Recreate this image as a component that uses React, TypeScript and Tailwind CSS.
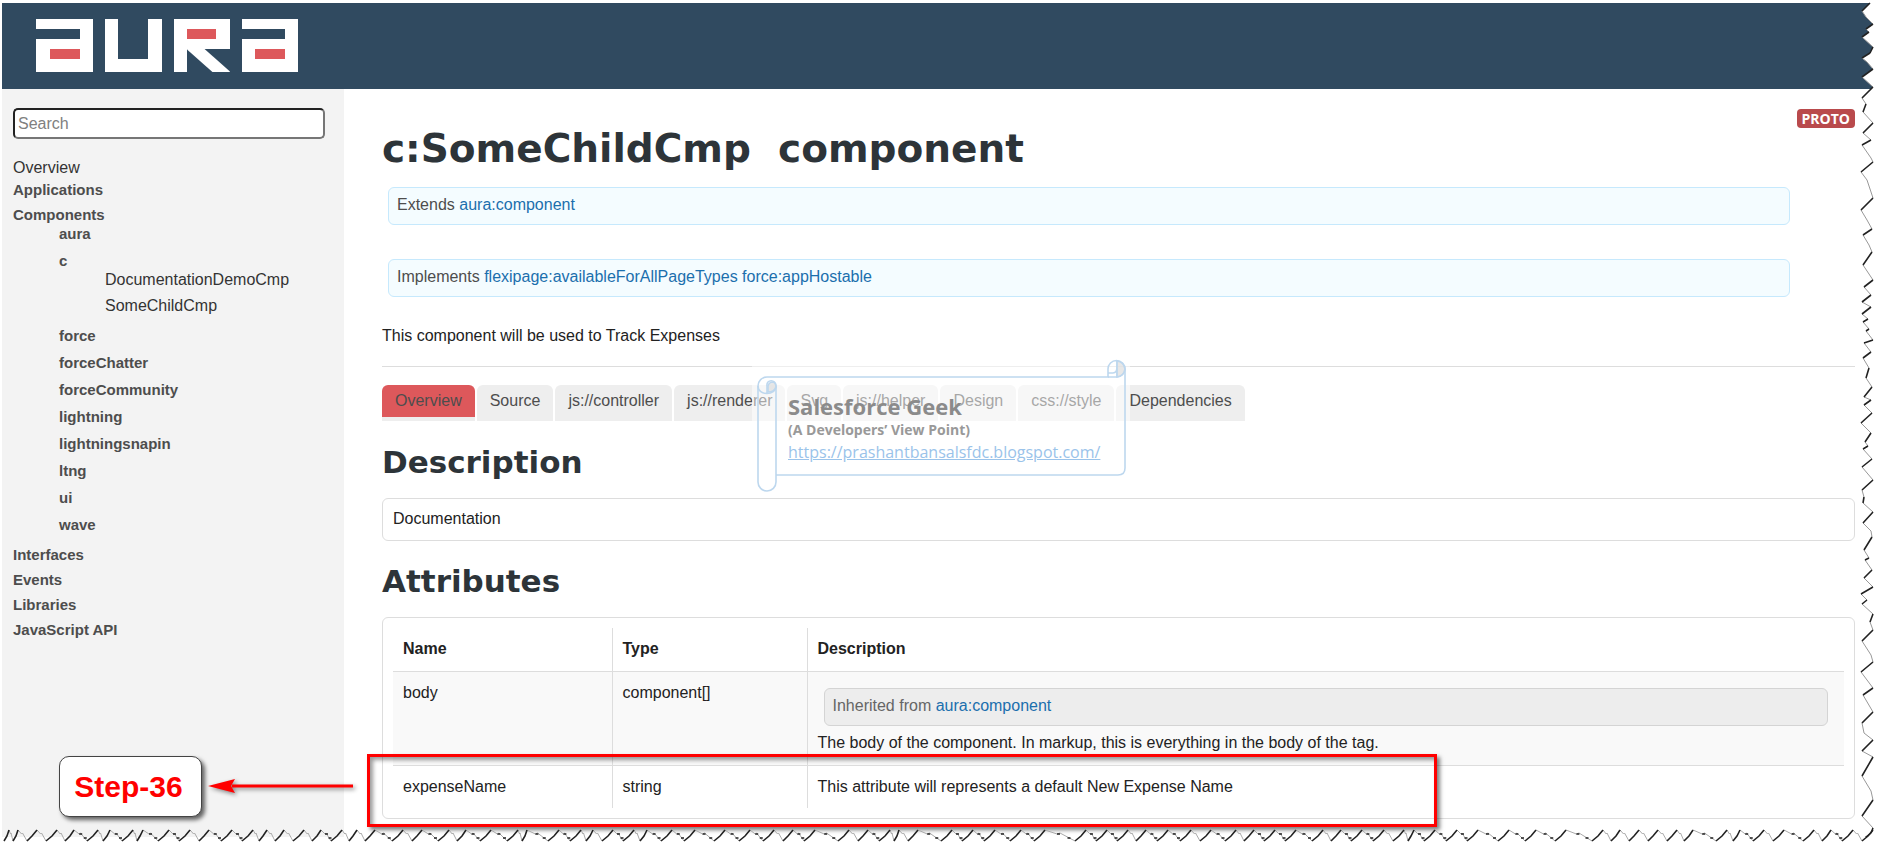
import React from "react";

type Point = [number, number];

const BOTTOM_PEAKS = [
  9, 18, 37, 57, 74, 98, 110, 133, 143, 169, 190, 209, 232, 253, 267, 284, 304, 321, 342, 357, 375, 403, 422, 449, 466,
  491, 518, 527, 559, 581, 593, 613, 634, 647, 672, 695, 725, 750, 774, 793, 815, 849, 868, 890, 899, 918, 952, 973,
  995, 1021, 1045, 1086, 1107, 1128, 1146, 1168, 1191, 1211, 1236, 1254, 1275, 1296, 1323, 1341, 1362, 1384, 1404,
  1414, 1435, 1457, 1478, 1509, 1536, 1566, 1603, 1620, 1639, 1658, 1677, 1693, 1727, 1740, 1764, 1784, 1814, 1831,
  1853, 1873,
];

const RIGHT_EDGE: Point[] = [
  [10, 3], [2, 11], [6, 17], [13, 24], [6, 29], [9, 32], [2, 37], [13, 47], [10, 53], [2, 58], [7, 62], [13, 69],
  [2, 77], [13, 87], [2, 98], [6, 104], [3, 112], [13, 123], [3, 133], [11, 140], [2, 145], [11, 158], [13, 162],
  [1, 172], [7, 180], [13, 198], [1, 210], [7, 220], [12, 229], [3, 235], [9, 245], [12, 252], [3, 265], [13, 280],
  [4, 287], [11, 295], [2, 302], [11, 307], [2, 314], [8, 319], [3, 322], [9, 329], [6, 331], [13, 340], [4, 343],
  [11, 352], [3, 358], [9, 368], [6, 378], [12, 387], [4, 397], [11, 400], [4, 405], [12, 413], [1, 423], [11, 433],
  [5, 442], [8, 446], [3, 449], [12, 459], [2, 467], [13, 480], [2, 490], [4, 497], [3, 503], [13, 512], [3, 523],
  [11, 531], [12, 537], [4, 550], [9, 558], [5, 560], [12, 570], [4, 578], [13, 587], [1, 594], [7, 600], [2, 604],
  [13, 614], [10, 622], [13, 630], [2, 641], [11, 655], [13, 662], [1, 672], [7, 680], [13, 688], [3, 695], [13, 712],
  [2, 723], [4, 733], [13, 740], [2, 751], [13, 757], [2, 776], [11, 791], [13, 800], [2, 816], [13, 828], [11, 833],
  [1, 841],
];

function bottomEdge() {
  let dark = "";
  let light = "";
  BOTTOM_PEAKS.forEach((x, i) => {
    const prev = i === 0 ? 0 : BOTTOM_PEAKS[i - 1];
    const rise = Math.min(11, Math.round((x - prev) * 0.55));
    const start = x - rise;
    dark += `M${start} 12L${start + Math.round(rise / 2)} 7L${x} 1`;
    const next = BOTTOM_PEAKS[i + 1];
    if (next !== undefined) {
      const end = next - Math.min(11, Math.round((next - x) * 0.55));
      const w = end - x;
      light += `M${x} 1L${x + w * 0.4} 5L${x + w * 0.5} 4L${end} 12`;
      if (w > 9) dark += `M${x + w * 0.4} 5h3M${x + w * 0.75} 9h3`;
    }
  });
  return { dark, light };
}

function rightEdge() {
  let dark = "";
  let light = "";
  RIGHT_EDGE.forEach(([x, y], i) => {
    const next = RIGHT_EDGE[i + 1];
    if (!next) return;
    const seg = `M${x} ${y}L${next[0]} ${next[1]}`;
    if (next[0] < x) dark += seg;
    else light += seg;
  });
  const fill = `M${RIGHT_EDGE.map(([x, y]) => `${x} ${y}`).join("L")}L40 841L40 0L10 0Z`;
  return { dark, light, fill };
}

const BOTTOM = bottomEdge();
const RIGHT = rightEdge();

function Logo() {
  return (
    <svg width="262" height="53" viewBox="0 0 262 53" role="img" aria-label="aura">
      <g fill="#fff">
        <rect x="0" y="0" width="57" height="10" />
        <rect x="44" y="10" width="13" height="10" />
        <rect x="0" y="20" width="57" height="33" />
        <rect x="69" y="0" width="13" height="53" />
        <rect x="112" y="0" width="14" height="53" />
        <rect x="69" y="40" width="57" height="13" />
        <rect x="138" y="0" width="56" height="30" />
        <rect x="138" y="0" width="13" height="53" />
        <rect x="206" y="0" width="56" height="10" />
        <rect x="249" y="10" width="13" height="10" />
        <rect x="206" y="20" width="56" height="33" />
      </g>
      <svg x="138" y="30" width="56" height="23" viewBox="0 0 56 23">
        <line x1="17" y1="-4" x2="52" y2="27" stroke="#fff" strokeWidth="12" />
      </svg>
      <g fill="#dd585b">
        <rect x="14" y="30" width="30" height="10" />
        <rect x="151" y="10" width="29" height="10" />
        <rect x="219" y="30" width="30" height="10" />
      </g>
    </svg>
  );
}

const NAMESPACES = ["force", "forceChatter", "forceCommunity", "lightning", "lightningsnapin", "ltng", "ui", "wave"];
const SECTIONS = ["Interfaces", "Events", "Libraries", "JavaScript API"];
const TABS = ["Source", "js://controller", "js://renderer", "Svg", "js://helper", "Design", "css://style", "Dependencies"];

function Sidebar() {
  return (
    <aside className="w-[342px] shrink-0 bg-[#f3f3f3] px-[11px] pt-[19px]">
      <input
        id="search"
        type="text"
        aria-label="Search"
        placeholder="Search"
        className="block h-[31px] w-[312px] rounded-[5px] border-2 border-t-[#222] border-l-[#222] border-r-[#767676] border-b-[#767676] bg-white px-[3px] text-base placeholder:text-[#808080]"
      />
      <nav className="pt-[18px] text-[15px] leading-[22px] font-bold text-[#4d4d4d]">
        <a href="#overview" className="block text-base leading-[22px] font-normal text-[#333]">
          Overview
        </a>
        <a href="#applications" className="block">
          Applications
        </a>
        <a href="#components" className="block pt-1 leading-[20px]">
          Components
        </a>
        <ul className="pl-[46px] leading-[27px]">
          <li className="leading-[18px]">
            <a href="#aura">aura</a>
          </li>
          <li className="pt-1">
            <a href="#c">c</a>
            <ul className="-mt-[7px] pb-[3px] pl-[46px] text-base leading-[26px] font-normal text-[#333]">
              <li className="-mt-1">
                <a href="#demo">DocumentationDemoCmp</a>
              </li>
              <li>
                <a href="#child">SomeChildCmp</a>
              </li>
            </ul>
          </li>
          {NAMESPACES.map((n) => (
            <li key={n}>
              <a href={`#${n}`}>{n}</a>
            </li>
          ))}
        </ul>
        <ul className="pt-1 leading-[25px]">
          {SECTIONS.map((s) => (
            <li key={s}>
              <a href="#section">{s}</a>
            </li>
          ))}
        </ul>
      </nav>
    </aside>
  );
}

function Watermark() {
  return (
    <div className="absolute top-[-26px] left-[370px] h-[134px] w-[378px] bg-white/50">
      <svg className="absolute top-0 left-[5px]" width="370" height="134" viewBox="757 359 370 134" fill="none" stroke="#bdd7ee" strokeWidth="1.6">
        <path d="M767 377H1109M776 475H1118Q1125 475 1125 468V369M758 386V482a9 9 0 0 0 18 0V386" />
        <path d="M767 377a9 9 0 0 0-9 9c0 10 18 10 18 0c0-7-10-7-9 0v7" />
        <path d="M1108 377V369a8.500 8.500 0 0 1 17 0a8.500 8.500 0 0 1-8 8h-9M1117 361v16M1108 373h5q4 0 4-6" />
        <path d="M768 392V386q1-4 5-4q3 1 3 5q-2 5-8 5Z" fill="#ddd" fillOpacity=".7" />
        <path d="M1117 361q7 1 8 8q-1 7-8 8Z" fill="#ddd" fillOpacity=".7" />
      </svg>
      <div className="absolute top-[34px] left-9 font-['Open_Sans','Noto_Sans',sans-serif] whitespace-nowrap text-[#8b8b8b]">
        <p className="text-[22px] leading-[26px] font-bold">Salesforce Geek</p>
        <p className="text-[14px] leading-[22px] font-bold text-[#999]">(A Developers’ View Point)</p>
        <a href="https://prashantbansalsfdc.blogspot.com/" className="block text-base leading-[22px] text-[#9ac3ea] underline">
          https://prashantbansalsfdc.blogspot.com/
        </a>
      </div>
    </div>
  );
}

function Tabs() {
  return (
    <div className="relative">
      <div role="tablist" className="flex items-start gap-[2px] text-base leading-[32px] whitespace-nowrap text-[#4d4d4d]">
        <button role="tab" aria-selected="true" className="h-9 rounded-t-md border-b-4 border-[#eee] bg-[#dd585b] px-[13px]">
          Overview
        </button>
        {TABS.map((t) => (
          <button key={t} role="tab" aria-selected="false" className="h-9 rounded-t-md bg-[#eee] px-[13px] pb-1">
            {t}
          </button>
        ))}
      </div>
      <Watermark />
    </div>
  );
}

const H2 = "font-['DejaVu_Sans',sans-serif] text-[31px] font-bold leading-[40px] text-[#2d3439]";
const NOTE = "ml-[6px] mr-[65px] h-[38px] rounded-md border border-[#c6e9fd] bg-[#f4fcff] px-2 leading-[34px] text-[#4d4d4d]";
const LINK = "text-[#1b6fad]";

function Attributes() {
  return (
    <div className="relative mt-[6px] rounded-md border border-[#ddd] p-[10px]">
      <table className="w-full border-collapse text-left">
        <thead>
          <tr className="h-[43px] border-b border-[#ddd]">
            <th className="w-[219px] border-r border-[#ddd] px-[10px]">Name</th>
            <th className="w-[195px] border-r border-[#ddd] px-[10px]">Type</th>
            <th className="px-[10px]">Description</th>
          </tr>
        </thead>
        <tbody className="align-top">
          <tr className="h-[94px] border-b border-[#ddd] bg-[#f9f9f9]">
            <td className="border-r border-[#ddd] px-[10px] pt-[10px]">body</td>
            <td className="border-r border-[#ddd] px-[10px] pt-[10px]">component[]</td>
            <td className="px-[10px] pt-4">
              <div className="mr-[6px] ml-[6px] h-[38px] rounded-md border border-[#d4d4d4] bg-[#ededed] px-2 leading-[34px] text-[#666]">
                Inherited from{" "}
                <a href="#aura-component" className={LINK}>
                  aura:component
                </a>
              </div>
              <p className="pt-[6px]">The body of the component. In markup, this is everything in the body of the tag.</p>
            </td>
          </tr>
          <tr className="h-[43px]">
            <td className="border-r border-[#ddd] px-[10px] pt-[10px]">expenseName</td>
            <td className="border-r border-[#ddd] px-[10px] pt-[10px]">string</td>
            <td className="px-[10px] pt-[10px]">This attribute will represents a default New Expense Name</td>
          </tr>
        </tbody>
      </table>
      <Callout />
    </div>
  );
}

function Callout() {
  return (
    <div className="pointer-events-none absolute -bottom-[9px] -left-[324px] h-[73px] w-[1378px]">
      <div className="absolute top-[2px] left-0 flex h-[61px] w-[143px] items-center justify-center rounded-[10px] border border-[#444] bg-white pr-1 text-[30px] font-bold text-[#f00] shadow-[3px_3px_4px_rgba(0,0,0,0.6)]">
        Step-36
      </div>
      <svg className="absolute top-[20px] left-[148px] drop-shadow-[2px_2px_2px_rgba(0,0,0,0.45)]" width="150" height="26" viewBox="0 0 150 26">
        <path d="M25 12H146" stroke="#f00" strokeWidth="3" />
        <path d="M1 12L28 5L24 12L28 19Z" fill="#f00" />
      </svg>
      <div className="absolute inset-y-0 right-0 w-[1070px] border-[3px] border-[#f00] shadow-[3px_3px_4px_rgba(0,0,0,0.5),inset_3px_3px_4px_rgba(0,0,0,0.4)]" />
    </div>
  );
}

export default function App() {
  return (
    <div className="relative overflow-hidden bg-white pt-[3px] pb-[10px] pl-[2px] font-['Liberation_Sans',Arial,sans-serif] text-base leading-[22px] text-[#222]">
      <header className="h-[86px] bg-[#304a60] pt-4 pl-[34px]">
        <a href="#home" className="block w-[262px]">
          <Logo />
        </a>
      </header>
      <div className="flex">
        <Sidebar />
        <main className="min-w-0 flex-1 pt-5 pr-[28px] pb-[22px] pl-[38px]">
          <div className="flex items-start justify-between">
            <h1 className="pt-[15px] font-['DejaVu_Sans',sans-serif] text-[39px] leading-[50px] font-bold whitespace-pre text-[#2d3439]">
              {"c:SomeChildCmp  component"}
            </h1>
            <span className="rounded bg-[#b94a4c] px-[5px] font-['Open_Sans',sans-serif] text-[14px] leading-[19px] font-bold text-white">
              PROTO
            </span>
          </div>
          <div className={`mt-[13px] ${NOTE}`}>
            Extends{" "}
            <a href="#aura-component" className={LINK}>
              aura:component
            </a>
          </div>
          <div className={`mt-[34px] ${NOTE}`}>
            Implements{" "}
            <a href="#flexipage" className={LINK}>
              flexipage:availableForAllPageTypes
            </a>{" "}
            <a href="#host" className={LINK}>
              force:appHostable
            </a>
          </div>
          <p className="pt-[28px]">This component will be used to Track Expenses</p>
          <hr className="mt-[19px] mb-[18px] border-[#ddd]" />
          <Tabs />
          <h2 className={`mt-[21px] mb-4 ${H2}`}>Description</h2>
          <div className="h-[43px] rounded-md border border-[#ddd] px-[10px] leading-[39px]">Documentation</div>
          <h2 className={`mt-5 mb-4 ${H2}`}>Attributes</h2>
          <Attributes />
        </main>
      </div>
      <svg className="absolute top-0 right-0 h-full w-[23px]" width="23" fill="none">
        <path d={RIGHT.fill} fill="#fff" />
        <path d={RIGHT.light} stroke="#999" strokeWidth="1" />
        <path d={RIGHT.dark} stroke="#222" strokeWidth="1.6" />
      </svg>
      <div className="absolute right-0 bottom-0 left-0 h-[14px] bg-white" />
      <svg className="absolute right-[8px] bottom-[8px] left-0 h-[14px]" width="1875" height="14" fill="none">
        <path d={BOTTOM.light} stroke="#aaa" strokeWidth="1" />
        <path d={BOTTOM.dark} stroke="#222" strokeWidth="1.6" />
      </svg>
    </div>
  );
}
